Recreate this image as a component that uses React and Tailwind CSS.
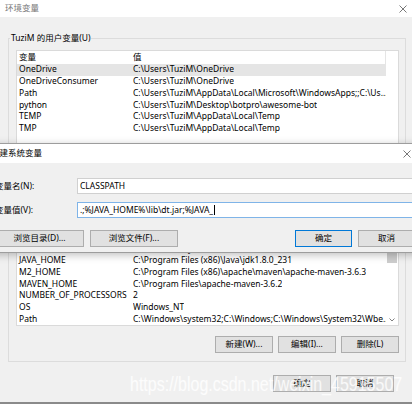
import React from 'react';

const userVars = [
  ['OneDrive', 'C:\\Users\\TuziM\\OneDrive'],
  ['OneDriveConsumer', 'C:\\Users\\TuziM\\OneDrive'],
  ['Path', 'C:\\Users\\TuziM\\AppData\\Local\\Microsoft\\WindowsApps;;C:\\Us...'],
  ['python', 'C:\\Users\\TuziM\\Desktop\\botpro\\awesome-bot'],
  ['TEMP', 'C:\\Users\\TuziM\\AppData\\Local\\Temp'],
  ['TMP', 'C:\\Users\\TuziM\\AppData\\Local\\Temp'],
];

const sysVars = [
  ['ComSpec', 'C:\\Windows\\system32\\cmd.exe'],
  ['DriverData', 'C:\\Windows\\System32\\Drivers\\DriverData'],
  ['JAVA_HOME', 'C:\\Program Files (x86)\\Java\\jdk1.8.0_231'],
  ['M2_HOME', 'C:\\Program Files (x86)\\apache\\maven\\apache-maven-3.6.3'],
  ['MAVEN_HOME', 'C:\\Program Files\\apache-maven-3.6.2'],
  ['NUMBER_OF_PROCESSORS', '2'],
  ['OS', 'Windows_NT'],
  ['Path', 'C:\\Windows\\system32;C:\\Windows;C:\\Windows\\System32\\Wbe...'],
];

const Row = ({ name, value, selected }) => (
  <div className={`flex items-center h-[11.7px] shrink-0 w-[369px] whitespace-nowrap ${selected ? 'bg-[#e5e5e5]' : ''}`}>
    <span className="w-[116px] pl-[2px] shrink-0">{name}</span>
    <span className="overflow-hidden">{value}</span>
  </div>
);

const Btn = ({ children, w = 'w-[58px]', primary }) => (
  <button className={`${w} h-[17px] bg-[#e1e1e1] border ${primary ? 'border-[#0078d7]' : 'border-[#adadad]'} text-[8.5px] leading-none text-black shrink-0`}>
    {children}
  </button>
);

const Close = ({ className }) => (
  <svg width="8" height="8" viewBox="0 0 8 8" className={className}>
    <path d="M0.5 0.5L7.5 7.5M7.5 0.5L0.5 7.5" stroke="#555" strokeWidth="0.8" />
  </svg>
);

export default function App() {
  return (
    <div className="w-[412px] h-[404px] relative overflow-hidden bg-[#f0f0f0] text-black font-['Noto_Sans','Noto_Sans_CJK_SC',sans-serif] text-[8.5px] flex flex-col">
      {/* title bar */}
      <div className="h-[17px] bg-white flex items-center justify-between pl-[5px] pr-[5px] shrink-0">
        <span className="text-[8.5px] text-[#777]">环境变量</span>
        <Close />
      </div>

      <div className="flex-1 flex flex-col pl-[8px] pr-[6px] pt-[15px]">
        {/* user variables */}
        <fieldset className="border border-[#dcdcdc]">
          <legend className="ml-[1px] px-[1px] leading-[12px]">TuziM 的用户变量(U)</legend>
          <div className="pl-[7px] pr-[6px] pb-[8px] pt-[6px]">
            <div className="h-[112px] bg-white border border-[#dadada] flex flex-col overflow-hidden">
              <div className="flex items-center h-[13px] w-[369px] shrink-0 border-r border-[#e5e5e5]">
                <span className="w-[116px] pl-[2px]">变量</span>
                <span>值</span>
              </div>
              {userVars.map(([n, v], i) => (
                <Row key={n + i} name={n} value={v} selected={i === 0} />
              ))}
            </div>
            <div className="flex justify-end gap-[5px] mt-[8px]">
              <Btn>新建(N)...</Btn>
              <Btn>编辑(E)...</Btn>
              <Btn>删除(D)</Btn>
            </div>
          </div>
        </fieldset>

        {/* system variables */}
        <fieldset className="border border-[#dcdcdc] mt-[6px]">
          <legend className="ml-[1px] px-[1px] leading-[12px]">系统变量(S)</legend>
          <div className="pl-[7px] pr-[6px] pb-[8px] pt-[6px]">
            <div className="h-[106px] bg-white border border-[#dadada] flex overflow-hidden">
              <div className="flex flex-col justify-end w-[369px]">
                {sysVars.map(([n, v]) => (
                  <Row key={n} name={n} value={v} />
                ))}
              </div>
              <div className="flex-1 flex flex-col items-center">
                <div className="w-[10px] h-[42px] bg-[#cdcdcd]" />
                <div className="flex-1" />
                <svg width="6" height="4" viewBox="0 0 6 4" className="mb-[3px]">
                  <path d="M0.5 0.5L3 3L5.5 0.5" fill="none" stroke="#606060" strokeWidth="0.8" />
                </svg>
              </div>
            </div>
            <div className="flex justify-end gap-[5px] mt-[10px]">
              <Btn>新建(W)...</Btn>
              <Btn>编辑(I)...</Btn>
              <Btn>删除(L)</Btn>
            </div>
          </div>
        </fieldset>

        <div className="flex justify-end gap-[5px] mt-[13px] pr-[12px]">
          <Btn>确定</Btn>
          <Btn>取消</Btn>
        </div>
        <div className="flex-1" />
      </div>
      <div className="h-[2px] bg-[#8a8a8a] shrink-0" />

      {/* new system variable dialog */}
      <div className="absolute top-[143px] left-[-30px] w-[456px] border border-[#9d9d9d] shadow-[0_2px_8px_rgba(0,0,0,0.25)] flex flex-col">
        <div className="h-[19px] bg-white flex items-center justify-between pl-[20px] pr-[14px]">
          <span className="text-[8.5px]">新建系统变量</span>
          <Close />
        </div>
        <div className="bg-[#f0f0f0] pl-[10px] pr-[10px] pt-[15px] pb-[6px] flex flex-col">
          <div className="flex items-center h-[16px]">
            <span className="w-[96px] pl-[14px] shrink-0">变量名(N):</span>
            <div className="flex-1 h-[16px] bg-white border border-[#d0d0d0] flex items-center pl-[2px]">CLASSPATH</div>
          </div>
          <div className="flex items-center h-[16px] mt-[8px]">
            <span className="w-[96px] pl-[14px] shrink-0">变量值(V):</span>
            <div className="flex-1 h-[16px] bg-white border border-[#7fb4e8] flex items-center pl-[2px]">
              .;%JAVA_HOME%\lib\dt.jar;%JAVA_
              <span className="inline-block w-[1px] h-[10px] bg-black ml-[1px]" />
            </div>
          </div>
          <div className="flex items-center mt-[12px] h-[16px] pl-[14px]">
            <Btn w="w-[89px]">浏览目录(D)...</Btn>
            <div className="w-[6px]" />
            <Btn w="w-[88px]">浏览文件(F)...</Btn>
            <div className="flex-1" />
            <Btn w="w-[57px]" primary>确定</Btn>
            <div className="w-[6px]" />
            <Btn w="w-[57px]">取消</Btn>
          </div>
        </div>
      </div>

      {/* watermark */}
      <div className="absolute left-[130px] top-[371px] text-[16px] leading-[20px] text-white/80 font-['Liberation_Sans',sans-serif] scale-y-[1.3] origin-top-left whitespace-nowrap pointer-events-none">
        https://blog.csdn.net/weixin_45915507
      </div>
    </div>
  );
}
